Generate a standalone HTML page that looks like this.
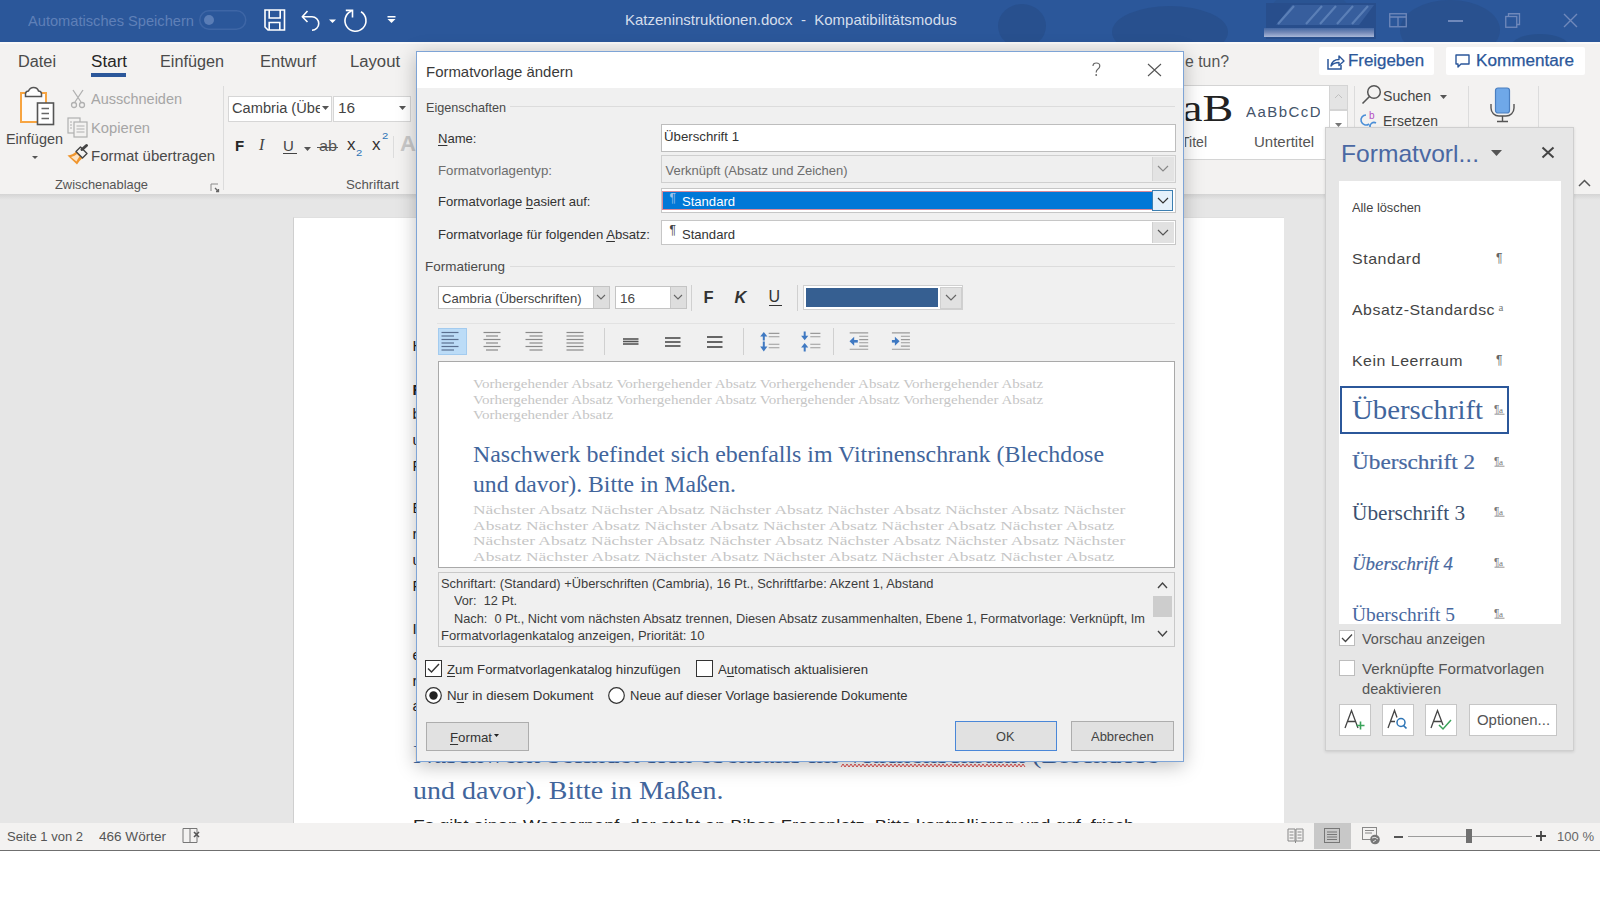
<!DOCTYPE html>
<html><head><meta charset="utf-8"><style>
html,body{margin:0;padding:0;width:1600px;height:900px;overflow:hidden;background:#fff;}
body{position:relative;font-family:"Liberation Sans", sans-serif;}
.a{position:absolute;}
.t{position:absolute;white-space:nowrap;line-height:1;transform-origin:0 0;}
svg{overflow:visible;}
</style></head><body>
<div class="a" style="left:0px;top:0px;width:1600px;height:42px;background:#2b579a;"></div>
<div class="a" style="left:0px;top:42px;width:1600px;height:152px;background:#f3f2f1;"></div>
<div class="a" style="left:0px;top:42px;width:1600px;height:2px;background:#faf9f8;"></div>
<div class="a" style="left:0px;top:194px;width:1600px;height:629px;background:#e6e6e6;"></div>
<div class="a" style="left:0px;top:194px;width:1600px;height:6px;background:linear-gradient(#d4d4d4,#e6e6e6);"></div>
<div class="a" style="left:293px;top:217px;width:991px;height:606px;background:#fff;border-left:1px solid #cfcfcf;border-top:1px solid #e0e0e0;box-sizing:border-box;"></div>
<div class="a" style="left:0px;top:850px;width:1600px;height:50px;background:#fff;"></div>
<span id="t0" class="t" style="left:412.5px;top:338.3px;font-size:15.00px;color:#222;font-weight:normal;">H</span>
<span id="t1" class="t" style="left:412.5px;top:382.3px;font-size:15.00px;color:#222;font-weight:bold;">F</span>
<span id="t2" class="t" style="left:412.5px;top:406.3px;font-size:15.00px;color:#222;font-weight:normal;">b</span>
<span id="t3" class="t" style="left:412.5px;top:432.3px;font-size:15.00px;color:#222;font-weight:normal;">u</span>
<span id="t4" class="t" style="left:412.5px;top:458.3px;font-size:15.00px;color:#222;font-weight:normal;">F</span>
<span id="t5" class="t" style="left:412.5px;top:500.3px;font-size:15.00px;color:#222;font-weight:normal;">E</span>
<span id="t6" class="t" style="left:412.5px;top:526.3px;font-size:15.00px;color:#222;font-weight:normal;">r</span>
<span id="t7" class="t" style="left:412.5px;top:552.3px;font-size:15.00px;color:#222;font-weight:normal;">u</span>
<span id="t8" class="t" style="left:412.5px;top:578.3px;font-size:15.00px;color:#222;font-weight:normal;">F</span>
<span id="t9" class="t" style="left:412.5px;top:621.3px;font-size:15.00px;color:#222;font-weight:normal;">I</span>
<span id="t10" class="t" style="left:412.5px;top:647.3px;font-size:15.00px;color:#222;font-weight:normal;">e</span>
<span id="t11" class="t" style="left:412.5px;top:673.3px;font-size:15.00px;color:#222;font-weight:normal;">r</span>
<span id="t12" class="t" style="left:412.5px;top:698.3px;font-size:15.00px;color:#222;font-weight:normal;">a</span>
<span id="t13" class="t" style="left:413.0px;top:742.2px;font-size:26.00px;color:#41659c;font-weight:normal;font-family:'Liberation Serif', serif;transform:scaleX(1.0864);">Naschwerk befindet sich ebenfalls im Vitrinenschrank (Blechdose</span>
<svg class="a" style="left:841px;top:763px;" width="186" height="5" viewBox="0 0 186 5"><path d="M0 4 L2 1 L4 4 M4 4 L6 1 L8 4 M8 4 L10 1 L12 4 M12 4 L14 1 L16 4 M16 4 L18 1 L20 4 M20 4 L22 1 L24 4 M24 4 L26 1 L28 4 M28 4 L30 1 L32 4 M32 4 L34 1 L36 4 M36 4 L38 1 L40 4 M40 4 L42 1 L44 4 M44 4 L46 1 L48 4 M48 4 L50 1 L52 4 M52 4 L54 1 L56 4 M56 4 L58 1 L60 4 M60 4 L62 1 L64 4 M64 4 L66 1 L68 4 M68 4 L70 1 L72 4 M72 4 L74 1 L76 4 M76 4 L78 1 L80 4 M80 4 L82 1 L84 4 M84 4 L86 1 L88 4 M88 4 L90 1 L92 4 M92 4 L94 1 L96 4 M96 4 L98 1 L100 4 M100 4 L102 1 L104 4 M104 4 L106 1 L108 4 M108 4 L110 1 L112 4 M112 4 L114 1 L116 4 M116 4 L118 1 L120 4 M120 4 L122 1 L124 4 M124 4 L126 1 L128 4 M128 4 L130 1 L132 4 M132 4 L134 1 L136 4 M136 4 L138 1 L140 4 M140 4 L142 1 L144 4 M144 4 L146 1 L148 4 M148 4 L150 1 L152 4 M152 4 L154 1 L156 4 M156 4 L158 1 L160 4 M160 4 L162 1 L164 4 M164 4 L166 1 L168 4 M168 4 L170 1 L172 4 M172 4 L174 1 L176 4 M176 4 L178 1 L180 4 M180 4 L182 1 L184 4 " fill="none" stroke="#e03c3c" stroke-width="0.9"/></svg>
<span id="t14" class="t" style="left:413.0px;top:778.2px;font-size:26.00px;color:#41659c;font-weight:normal;font-family:'Liberation Serif', serif;transform:scaleX(1.0752);">und davor). Bitte in Maßen.</span>
<span id="t15" class="t" style="left:413.0px;top:817.3px;font-size:15.00px;color:#222;font-weight:normal;transform:scaleX(1.2109);">Es gibt einen Wassernapf, der steht an Bibos Fressplatz. Bitte kontrollieren und ggf. frisch</span>
<div class="a" style="left:0px;top:823px;width:1600px;height:28px;background:#f3f2f1;border-bottom:1px solid #6f6f6f;box-sizing:border-box;"></div>
<span id="t16" class="t" style="left:7.0px;top:830.0px;font-size:13.00px;color:#555;font-weight:normal;transform:scaleX(1.0015);">Seite 1 von 2</span>
<span id="t17" class="t" style="left:99.0px;top:830.0px;font-size:13.00px;color:#555;font-weight:normal;transform:scaleX(1.0424);">466 Wörter</span>
<svg class="a" style="left:182px;top:827px;" width="20" height="17" viewBox="0 0 20 17"><path d="M1 1.5 H8 V15.5 H1 Z M8 1.5 H15 V15.5 H8" fill="none" stroke="#777" stroke-width="1"/><path d="M12 5 L17 10 M17 5 L12 10" stroke="#555" stroke-width="1.6"/></svg>
<svg class="a" style="left:1287px;top:828px;" width="17" height="16" viewBox="0 0 17 16"><path d="M1 1 H8 V13 H1 Z M9 1 H16 V13 H9 Z" fill="none" stroke="#888" stroke-width="1"/><path d="M2.5 4 H6.5 M2.5 7 H6.5 M2.5 10 H6.5 M10.5 4 H14.5 M10.5 7 H14.5 M10.5 10 H14.5 M8.5 13 V15" stroke="#888" stroke-width="1"/></svg>
<div class="a" style="left:1314px;top:823px;width:37px;height:26px;background:#c8c8c8;"></div>
<svg class="a" style="left:1324px;top:828px;" width="17" height="16" viewBox="0 0 17 16"><rect x="0.5" y="0.5" width="15" height="14" fill="none" stroke="#777" stroke-width="1"/><path d="M3 4 H13 M3 6.5 H13 M3 9 H13 M3 11.5 H13" stroke="#777" stroke-width="1"/></svg>
<svg class="a" style="left:1362px;top:827px;" width="20" height="19" viewBox="0 0 20 19"><rect x="0.5" y="0.5" width="14" height="12" fill="none" stroke="#888" stroke-width="1"/><path d="M3 3.5 H12 M3 6 H10" stroke="#888" stroke-width="1"/><circle cx="13" cy="12.5" r="4.8" fill="#777"/><path d="M10 11 Q13 9 16 12 M11 15 L14 13" stroke="#eee" stroke-width="0.9" fill="none"/></svg>
<div class="a" style="left:1394px;top:835.5px;width:9px;height:2px;background:#555;"></div>
<div class="a" style="left:1408px;top:835.5px;width:124px;height:1.2px;background:#9c9c9c;"></div>
<div class="a" style="left:1466px;top:829px;width:6px;height:14px;background:#707070;"></div>
<svg class="a" style="left:1535px;top:830px;" width="12" height="12" viewBox="0 0 12 12"><path d="M6 1 V11 M1 6 H11" stroke="#444" stroke-width="1.8"/></svg>
<span id="t18" class="t" style="left:1557.0px;top:830.0px;font-size:13.00px;color:#666;font-weight:normal;transform:scaleX(1.0035);">100 %</span>
<span id="t19" class="t" style="left:28.0px;top:12.9px;font-size:15.00px;color:#5f80b8;font-weight:normal;transform:scaleX(0.9758);">Automatisches Speichern</span>
<span id="t20" class="t" style="left:625.0px;top:12.1px;font-size:15.00px;color:#d5deec;font-weight:normal;">Katzeninstruktionen.docx&nbsp; - &nbsp;Kompatibilitätsmodus</span>
<span id="t21" class="t" style="left:18.0px;top:53.8px;font-size:16.00px;color:#4a4a4a;font-weight:normal;transform:scaleX(1.0176);">Datei</span>
<span id="t22" class="t" style="left:91.0px;top:53.8px;font-size:16.00px;color:#262626;font-weight:normal;transform:scaleX(1.0672);">Start</span>
<div class="a" style="left:91px;top:73px;width:35px;height:4px;background:#2b579a;"></div>
<span id="t23" class="t" style="left:160.0px;top:53.8px;font-size:16.00px;color:#4a4a4a;font-weight:normal;transform:scaleX(1.0133);">Einfügen</span>
<span id="t24" class="t" style="left:260.0px;top:53.8px;font-size:16.00px;color:#4a4a4a;font-weight:normal;transform:scaleX(1.0329);">Entwurf</span>
<span id="t25" class="t" style="left:350.0px;top:53.8px;font-size:16.00px;color:#4a4a4a;font-weight:normal;transform:scaleX(1.0415);">Layout</span>
<span id="t26" class="t" style="left:1185.0px;top:53.8px;font-size:16.00px;color:#555;font-weight:normal;transform:scaleX(0.9889);">e tun?</span>
<svg class="a" style="left:980px;top:0px;overflow:hidden;" width="620" height="42" viewBox="0 0 620 42"><ellipse cx="42" cy="26" rx="24" ry="22" fill="#28508e"/><ellipse cx="190" cy="32" rx="58" ry="26" fill="#28508e"/><ellipse cx="330" cy="12" rx="40" ry="22" fill="#2a5493"/><ellipse cx="470" cy="30" rx="50" ry="30" fill="#29518f"/><ellipse cx="560" cy="48" rx="30" ry="14" fill="#27508d"/></svg>
<svg class="a" style="left:199px;top:10px;" width="48" height="20" viewBox="0 0 48 20"><rect x="0.75" y="0.75" width="46" height="18.5" rx="9.25" fill="none" stroke="#3e66a6" stroke-width="1.5"/><circle cx="10" cy="10" r="5" fill="#5a7db6"/></svg>
<svg class="a" style="left:264px;top:9px;" width="22" height="23" viewBox="0 0 22 23"><path d="M1 1 H20.5 V21 H4 L1 18 Z" fill="none" stroke="#fff" stroke-width="1.6"/><path d="M5.2 1 V9 H16.2 V1" fill="none" stroke="#fff" stroke-width="1.6"/><path d="M5.2 21 V13.5 H15.8 V21" fill="none" stroke="#fff" stroke-width="1.6"/></svg>
<svg class="a" style="left:300px;top:8px;" width="24" height="24" viewBox="0 0 24 24"><path d="M7.5 3 L2.3 8.75 L7.5 14 M2.3 8.75 H12 A6.75 6.75 0 0 1 12 22.25" fill="none" stroke="#fff" stroke-width="1.6" stroke-linejoin="round"/></svg>
<svg class="a" style="left:328.5px;top:18.5px;" width="8" height="5" viewBox="0 0 8 5"><path d="M0 0.5 H7 L3.5 4 Z" fill="#fff"/></svg>
<svg class="a" style="left:343px;top:8px;" width="26" height="26" viewBox="0 0 26 26"><path d="M8.5 3 A10.5 10.5 0 1 0 18 3.8" fill="none" stroke="#fff" stroke-width="1.6"/><path d="M2.8 2.4 H9.5 V9.5" fill="none" stroke="#fff" stroke-width="1.6"/></svg>
<svg class="a" style="left:387px;top:16px;" width="10" height="8" viewBox="0 0 10 8"><rect x="0.5" y="0" width="8" height="1.5" fill="#fff"/><path d="M0.5 3 H8.5 L4.5 7 Z" fill="#fff"/></svg>
<svg class="a" style="left:1262px;top:2px;" width="115" height="38" viewBox="0 0 115 38"><defs><linearGradient id="sbg" x1="0" y1="0" x2="0" y2="1"><stop offset="0" stop-color="#4468a3"/><stop offset="0.5" stop-color="#7489b8"/><stop offset="1" stop-color="#a9b8d8"/></linearGradient></defs><rect x="4" y="1" width="110" height="36" fill="#284e8c"/><path d="M30 3 H112 L97 23 H14 Z" fill="#38609e" opacity="0.9"/><path d="M16 22 L32 4 M44 22 L60 4 M58 22 L74 4 M75 22 L91 4 M90 22 L106 4" stroke="#6a8dc2" stroke-width="2.2" opacity="0.7"/><rect x="2" y="26" width="110" height="9" fill="url(#sbg)"/></svg>
<svg class="a" style="left:1389px;top:13px;" width="19" height="15" viewBox="0 0 19 15"><rect x="0.75" y="0.75" width="16.5" height="13" fill="none" stroke="#7089bb" stroke-width="1.3"/><path d="M0.75 4 H17.25 M9 4 V13.5" stroke="#7089bb" stroke-width="1.3"/></svg>
<div class="a" style="left:1448px;top:20px;width:15px;height:1.5px;background:#7089bb;"></div>
<svg class="a" style="left:1505px;top:13px;" width="16" height="15" viewBox="0 0 16 15"><rect x="0.75" y="3.5" width="11" height="10.75" fill="none" stroke="#7089bb" stroke-width="1.3"/><path d="M3.5 3.5 V0.75 H14.5 V11.5 H11.75" fill="none" stroke="#7089bb" stroke-width="1.3"/></svg>
<svg class="a" style="left:1563px;top:13px;" width="15" height="15" viewBox="0 0 15 15"><path d="M1 1 L14 14 M14 1 L1 14" stroke="#7089bb" stroke-width="1.4"/></svg>
<svg class="a" style="left:18px;top:86px;" width="40" height="40" viewBox="0 0 40 40"><rect x="3" y="7" width="25" height="29" fill="#fbfbfb" stroke="#f7a542" stroke-width="2"/><path d="M7.5 10.5 V7.5 Q8 5 10.5 5 Q12 1.5 15.5 1.5 Q19.5 1.5 20.5 5 Q23 5 23.5 7.5 V10.5 Z" fill="#fff" stroke="#555" stroke-width="1.5"/><rect x="19.5" y="17" width="16" height="21.5" fill="#fff" stroke="#555" stroke-width="1.6"/><path d="M23.5 22.5 H31 M23.5 27.5 H31 M23.5 32.5 H31" stroke="#666" stroke-width="1.3"/></svg>
<span id="t27" class="t" style="left:6.0px;top:130.6px;font-size:15.00px;color:#4a4a4a;font-weight:normal;transform:scaleX(0.9619);">Einfügen</span>
<svg class="a" style="left:32px;top:155.5px;" width="6" height="4" viewBox="0 0 6 4"><path d="M0 0 H6 L3 3 Z" fill="#555"/></svg>
<svg class="a" style="left:70px;top:89px;" width="16" height="20" viewBox="0 0 16 20"><path d="M3 1 L11 13 M13 1 L5 13" stroke="#b0b0b0" stroke-width="1.3" fill="none"/><circle cx="4" cy="16" r="2.5" fill="none" stroke="#b0b0b0" stroke-width="1.3"/><circle cx="12" cy="16" r="2.5" fill="none" stroke="#b0b0b0" stroke-width="1.3"/></svg>
<span id="t28" class="t" style="left:90.5px;top:91.8px;font-size:14.00px;color:#a6a6a6;font-weight:normal;transform:scaleX(1.0350);">Ausschneiden</span>
<svg class="a" style="left:67px;top:117px;" width="21" height="21" viewBox="0 0 21 21"><rect x="1" y="1" width="12" height="15" fill="none" stroke="#b0b0b0" stroke-width="1.2"/><rect x="7" y="5" width="13" height="15" fill="#f3f2f1" stroke="#b0b0b0" stroke-width="1.2"/><path d="M3 5 H5 M3 8 H5 M3 11 H5 M9.5 9 H17.5 M9.5 12 H17.5 M9.5 15 H17.5" stroke="#b0b0b0" stroke-width="1"/></svg>
<span id="t29" class="t" style="left:90.5px;top:121.1px;font-size:14.00px;color:#a6a6a6;font-weight:normal;transform:scaleX(1.0536);">Kopieren</span>
<svg class="a" style="left:66px;top:145px;" width="24" height="20" viewBox="0 0 24 20"><path d="M1.5 10.5 Q7 10 10 6.5 L16.5 13 Q13 16 11 19.5 Z" fill="#f0962e"/><path d="M5 12 Q9 11 11 9 L13.5 11.5 Q11.5 14 10.5 16.5 Z" fill="#fde3c4"/><path d="M10 6.5 L14.5 2 L21 8.5 L16.5 13 Z" fill="#f3f3f3" stroke="#444" stroke-width="1.4" stroke-linejoin="round"/><path d="M16 4.5 L20.5 0.5" stroke="#444" stroke-width="3" stroke-linecap="round"/></svg>
<span id="t30" class="t" style="left:90.5px;top:149.3px;font-size:14.00px;color:#4a4a4a;font-weight:normal;transform:scaleX(1.0700);">Format übertragen</span>
<span id="t31" class="t" style="left:55.0px;top:177.5px;font-size:13.00px;color:#555;font-weight:normal;transform:scaleX(0.9897);">Zwischenablage</span>
<svg class="a" style="left:210px;top:183px;" width="10" height="9" viewBox="0 0 10 9"><path d="M1 8 V1 H8" fill="none" stroke="#8a8a8a" stroke-width="1"/><path d="M5 5 L8.5 8.5 M6 8.5 H8.5 V6" stroke="#666" stroke-width="1.3" fill="none"/></svg>
<div class="a" style="left:223px;top:86px;width:1px;height:104px;background:#dcdcdc;"></div>
<div class="a" style="left:227.5px;top:95.5px;width:104px;height:26px;background:#fff;border:1px solid #d6d6d6;box-sizing:border-box;"></div>
<div class="a" style="left:332.5px;top:95.5px;width:78px;height:26px;background:#fff;border:1px solid #d6d6d6;box-sizing:border-box;"></div>
<span id="t32" class="t" style="left:232.0px;top:101.4px;font-size:14.00px;color:#444;font-weight:normal;transform:scaleX(1.0448);clip-path:inset(-6px 3px -6px 0);">Cambria (Übe</span>
<svg class="a" style="left:322px;top:106px;" width="8" height="5" viewBox="0 0 8 5"><path d="M0 0 H7 L3.5 4 Z" fill="#555"/></svg>
<span id="t33" class="t" style="left:338.0px;top:101.4px;font-size:14.00px;color:#444;font-weight:normal;transform:scaleX(1.0975);">16</span>
<svg class="a" style="left:399px;top:106px;" width="8" height="5" viewBox="0 0 8 5"><path d="M0 0 H7 L3.5 4 Z" fill="#555"/></svg>
<span id="t34" class="t" style="left:235.0px;top:138.3px;font-size:15.00px;color:#262626;font-weight:bold;">F</span>
<span id="t35" class="t" style="left:259.0px;top:137.3px;font-size:16.00px;color:#444;font-weight:normal;font-family:'Liberation Serif', serif;font-style:italic;">I</span>
<span id="t36" class="t" style="left:283.0px;top:138.0px;font-size:15.00px;color:#444;font-weight:normal;">U</span>
<div class="a" style="left:283px;top:152.5px;width:14px;height:1.3px;background:#444;"></div>
<svg class="a" style="left:304px;top:147px;" width="8" height="5" viewBox="0 0 8 5"><path d="M0 0 H7 L3.5 4 Z" fill="#555"/></svg>
<span id="t37" class="t" style="left:319.0px;top:138.0px;font-size:15.00px;color:#555;font-weight:normal;transform:scaleX(1.0837);">ab</span>
<div class="a" style="left:317px;top:147px;width:21px;height:1.3px;background:#555;"></div>
<span id="t38" class="t" style="left:347.0px;top:136.3px;font-size:17.00px;color:#333;font-weight:normal;">x</span>
<span id="t39" class="t" style="left:356.0px;top:149.4px;font-size:9.00px;color:#2e75b6;font-weight:normal;transform:scaleX(1.2451);">2</span>
<span id="t40" class="t" style="left:372.0px;top:136.3px;font-size:17.00px;color:#333;font-weight:normal;">x</span>
<span id="t41" class="t" style="left:382.0px;top:132.4px;font-size:9.00px;color:#2e75b6;font-weight:normal;transform:scaleX(1.2451);">2</span>
<div class="a" style="left:393px;top:136px;width:1px;height:22px;background:#dcdcdc;"></div>
<span id="t42" class="t" style="left:400.0px;top:133.4px;font-size:22.00px;color:#c8c8c8;font-weight:bold;">A</span>
<span id="t43" class="t" style="left:346.0px;top:177.7px;font-size:13.00px;color:#555;font-weight:normal;transform:scaleX(1.0193);">Schriftart</span>
<div class="a" style="left:1319px;top:47px;width:115px;height:28px;background:#fff;border-radius:2px;"></div>
<div class="a" style="left:1445.5px;top:47px;width:139px;height:28px;background:#fff;border-radius:2px;"></div>
<svg class="a" style="left:1327px;top:54px;" width="18" height="16" viewBox="0 0 18 16"><path d="M1 5 V15 H14 V11" fill="none" stroke="#2b579a" stroke-width="1.5"/><path d="M4 12 C5 7 9 5.5 12 5.5 V2 L17 7 L12 11.5 V8.5 C9 8.5 6 9.5 4 12 Z" fill="none" stroke="#2b579a" stroke-width="1.4" stroke-linejoin="round"/></svg>
<span id="t44" class="t" style="left:1347.5px;top:53.2px;font-size:16.00px;color:#2b579a;font-weight:normal;transform:scaleX(1.0556);-webkit-text-stroke:0.25px #2b579a;">Freigeben</span>
<svg class="a" style="left:1455px;top:54px;" width="16" height="16" viewBox="0 0 16 16"><path d="M1 1 H14 V10 H6 L3 13 V10 H1 Z" fill="none" stroke="#2b579a" stroke-width="1.4" stroke-linejoin="round"/></svg>
<span id="t45" class="t" style="left:1475.5px;top:53.2px;font-size:16.00px;color:#2b579a;font-weight:normal;transform:scaleX(1.0707);-webkit-text-stroke:0.25px #2b579a;">Kommentare</span>
<div class="a" style="left:1176px;top:85px;width:153px;height:75px;background:#fff;border:1px solid #d4d4d4;border-right:none;box-sizing:border-box;"></div>
<div class="a" style="left:1329px;top:85px;width:19px;height:25px;background:#e4e4e4;border:1px solid #d4d4d4;box-sizing:border-box;"></div>
<svg class="a" style="left:1335px;top:94px;" width="7" height="5" viewBox="0 0 7 5"><path d="M0 4 L3.5 0.5 L7 4" fill="none" stroke="#c0c0c0" stroke-width="1"/></svg>
<div class="a" style="left:1329px;top:110px;width:19px;height:26px;background:#fff;border:1px solid #d4d4d4;box-sizing:border-box;"></div>
<div class="a" style="left:1329px;top:135px;width:19px;height:25px;background:#fff;border:1px solid #d4d4d4;box-sizing:border-box;"></div>
<svg class="a" style="left:1335px;top:123px;" width="8" height="5" viewBox="0 0 8 5"><path d="M0 0 H7 L3.5 4 Z" fill="#777"/></svg>
<span id="t46" class="t" style="left:1182.0px;top:89.7px;font-size:37.00px;color:#222;font-weight:normal;font-family:'Liberation Serif', serif;transform:scaleX(1.2466);clip-path:inset(-10px 0 -10px 3px);">aB</span>
<span id="t47" class="t" style="left:1246.0px;top:104.2px;font-size:15.50px;color:#44546a;font-weight:normal;transform:scaleX(0.9670);letter-spacing:1.5px;clip-path:inset(-5px 2px -5px 0);">AaBbCcD</span>
<span id="t48" class="t" style="left:1181.0px;top:135.4px;font-size:14.00px;color:#555;font-weight:normal;transform:scaleX(1.0025);clip-path:inset(-5px 0 -5px 4px);">Titel</span>
<span id="t49" class="t" style="left:1254.0px;top:135.4px;font-size:14.00px;color:#555;font-weight:normal;transform:scaleX(1.0721);">Untertitel</span>
<div class="a" style="left:1354px;top:86px;width:1px;height:104px;background:#dcdcdc;"></div>
<svg class="a" style="left:1361px;top:84px;" width="22" height="20" viewBox="0 0 22 20"><circle cx="13" cy="8" r="6.3" fill="none" stroke="#555" stroke-width="1.5"/><path d="M8.5 12.5 L1.5 19.5" stroke="#555" stroke-width="1.6"/></svg>
<span id="t50" class="t" style="left:1383.0px;top:88.5px;font-size:14.00px;color:#444;font-weight:normal;transform:scaleX(1.0111);">Suchen</span>
<svg class="a" style="left:1440px;top:95px;" width="8" height="5" viewBox="0 0 8 5"><path d="M0 0 H7 L3.5 4 Z" fill="#555"/></svg>
<svg class="a" style="left:1360px;top:110px;" width="26" height="18" viewBox="0 0 26 18"><path d="M6 5 A5 5 0 1 0 9 14" fill="none" stroke="#4b8fd8" stroke-width="1.6"/><path d="M10 17 A4 4 0 0 1 16 13" fill="none" stroke="#4b8fd8" stroke-width="1.6"/><text x="9" y="9" font-size="10" font-family="Liberation Sans" fill="#b44fc4">b</text></svg>
<span id="t51" class="t" style="left:1383.0px;top:114.1px;font-size:14.00px;color:#444;font-weight:normal;transform:scaleX(0.9954);">Ersetzen</span>
<div class="a" style="left:1468px;top:86px;width:1px;height:104px;background:#dcdcdc;"></div>
<svg class="a" style="left:1489px;top:87px;" width="28" height="37" viewBox="0 0 28 37"><rect x="6.5" y="1" width="14" height="25" rx="2.5" fill="#6fa8e8" stroke="#4a7fc0" stroke-width="1.2"/><path d="M2 17 V21 A8 8 0 0 0 10 29 H17 A8 8 0 0 0 25 21 V17" fill="none" stroke="#555" stroke-width="1.4"/><path d="M13.5 29 V34 M8 34.5 H19" stroke="#555" stroke-width="1.4"/></svg>
<div class="a" style="left:1538px;top:86px;width:1px;height:104px;background:#dcdcdc;"></div>
<svg class="a" style="left:1578px;top:179px;" width="13" height="8" viewBox="0 0 13 8"><path d="M1 7 L6.5 1.5 L12 7" fill="none" stroke="#555" stroke-width="1.5"/></svg>
<div class="a" style="left:1325px;top:127px;width:249px;height:624px;background:#e6e6e6;border:1px solid #cfcfcf;box-sizing:border-box;box-shadow:0 1px 3px rgba(0,0,0,0.12);"></div>
<span id="t52" class="t" style="left:1340.5px;top:142.3px;font-size:24.00px;color:#4a68a3;font-weight:normal;transform:scaleX(1.0248);">Formatvorl...</span>
<svg class="a" style="left:1491px;top:150px;" width="12" height="7" viewBox="0 0 12 7"><path d="M0 0 H11 L5.5 6 Z" fill="#555"/></svg>
<svg class="a" style="left:1541px;top:146px;" width="14" height="13" viewBox="0 0 14 13"><path d="M1.5 1.5 L12.5 11.5 M12.5 1.5 L1.5 11.5" stroke="#444" stroke-width="2"/></svg>
<div class="a" style="left:1339px;top:181px;width:222px;height:443px;background:#fff;"></div>
<span id="t53" class="t" style="left:1351.5px;top:201.0px;font-size:13.00px;color:#444;font-weight:normal;transform:scaleX(0.9839);">Alle löschen</span>
<span id="t54" class="t" style="left:1351.5px;top:251.3px;font-size:15.00px;color:#444;font-weight:normal;transform:scaleX(1.0643);letter-spacing:0.5px;">Standard</span>
<span id="t55" class="t" style="left:1351.5px;top:302.3px;font-size:15.00px;color:#444;font-weight:normal;transform:scaleX(1.0579);letter-spacing:0.5px;">Absatz-Standardsc</span>
<span id="t56" class="t" style="left:1351.5px;top:353.3px;font-size:15.00px;color:#444;font-weight:normal;transform:scaleX(1.0588);letter-spacing:0.5px;">Kein Leerraum</span>
<span id="t57" class="t" style="left:1496.0px;top:251.8px;font-size:12.00px;color:#666;font-weight:normal;">¶</span>
<span id="t58" class="t" style="left:1498.5px;top:302.3px;font-size:11.00px;color:#777;font-weight:normal;font-family:'Liberation Serif', serif;">a</span>
<span id="t59" class="t" style="left:1496.0px;top:353.8px;font-size:12.00px;color:#666;font-weight:normal;">¶</span>
<div class="a" style="left:1340px;top:386px;width:169px;height:48px;border:2px solid #2b579a;box-sizing:border-box;"></div>
<span id="t60" class="t" style="left:1351.5px;top:397.4px;font-size:27.00px;color:#41659c;font-weight:normal;font-family:'Liberation Serif', serif;transform:scaleX(1.0660);">Überschrift</span>
<span id="t61" class="t" style="left:1351.5px;top:452.3px;font-size:20.00px;color:#4868a0;font-weight:normal;font-family:'Liberation Serif', serif;transform:scaleX(1.1610);-webkit-text-stroke:0.2px #4868a0;">Überschrift 2</span>
<span id="t62" class="t" style="left:1351.5px;top:503.3px;font-size:20.00px;color:#3b5070;font-weight:normal;font-family:'Liberation Serif', serif;transform:scaleX(1.0659);">Überschrift 3</span>
<span id="t63" class="t" style="left:1351.5px;top:554.5px;font-size:18.50px;color:#4868a0;font-weight:normal;font-family:'Liberation Serif', serif;font-style:italic;transform:scaleX(1.0185);-webkit-text-stroke:0.2px #4868a0;">Überschrift 4</span>
<span id="t64" class="t" style="left:1351.5px;top:605.5px;font-size:18.50px;color:#4868a0;font-weight:normal;font-family:'Liberation Serif', serif;transform:scaleX(1.0502);">Überschrift 5</span>
<svg class="a" style="left:1494px;top:405px;" width="11" height="10" viewBox="0 0 11 10"><text x="0" y="7.5" font-size="10" font-family="Liberation Sans" fill="#777">¶</text><text x="5" y="7.5" font-size="9" font-family="Liberation Serif" fill="#777">a</text><path d="M0.5 9.2 H10.5" stroke="#888" stroke-width="0.9"/></svg>
<svg class="a" style="left:1494px;top:457px;" width="11" height="10" viewBox="0 0 11 10"><text x="0" y="7.5" font-size="10" font-family="Liberation Sans" fill="#777">¶</text><text x="5" y="7.5" font-size="9" font-family="Liberation Serif" fill="#777">a</text><path d="M0.5 9.2 H10.5" stroke="#888" stroke-width="0.9"/></svg>
<svg class="a" style="left:1494px;top:507px;" width="11" height="10" viewBox="0 0 11 10"><text x="0" y="7.5" font-size="10" font-family="Liberation Sans" fill="#777">¶</text><text x="5" y="7.5" font-size="9" font-family="Liberation Serif" fill="#777">a</text><path d="M0.5 9.2 H10.5" stroke="#888" stroke-width="0.9"/></svg>
<svg class="a" style="left:1494px;top:558px;" width="11" height="10" viewBox="0 0 11 10"><text x="0" y="7.5" font-size="10" font-family="Liberation Sans" fill="#777">¶</text><text x="5" y="7.5" font-size="9" font-family="Liberation Serif" fill="#777">a</text><path d="M0.5 9.2 H10.5" stroke="#888" stroke-width="0.9"/></svg>
<svg class="a" style="left:1494px;top:609px;" width="11" height="10" viewBox="0 0 11 10"><text x="0" y="7.5" font-size="10" font-family="Liberation Sans" fill="#777">¶</text><text x="5" y="7.5" font-size="9" font-family="Liberation Serif" fill="#777">a</text><path d="M0.5 9.2 H10.5" stroke="#888" stroke-width="0.9"/></svg>
<div class="a" style="left:1339px;top:630px;width:16px;height:16px;background:#fff;border:1px solid #bdbdbd;box-sizing:border-box;"></div>
<svg class="a" style="left:1341px;top:633px;" width="12" height="10" viewBox="0 0 12 10"><path d="M1 5 L4.5 8.5 L11 1.5" fill="none" stroke="#444" stroke-width="1.3"/></svg>
<span id="t65" class="t" style="left:1362.0px;top:632.1px;font-size:14.00px;color:#555;font-weight:normal;transform:scaleX(1.0331);">Vorschau anzeigen</span>
<div class="a" style="left:1339px;top:660px;width:16px;height:16px;background:#fff;border:1px solid #bdbdbd;box-sizing:border-box;"></div>
<span id="t66" class="t" style="left:1362.0px;top:662.1px;font-size:14.00px;color:#555;font-weight:normal;transform:scaleX(1.0782);">Verknüpfte Formatvorlagen</span>
<span id="t67" class="t" style="left:1362.0px;top:682.1px;font-size:14.00px;color:#555;font-weight:normal;transform:scaleX(1.0470);">deaktivieren</span>
<div class="a" style="left:1339px;top:704px;width:32px;height:32px;background:#fff;border:1px solid #c6c6c6;box-sizing:border-box;"></div>
<div class="a" style="left:1382px;top:704px;width:32px;height:32px;background:#fff;border:1px solid #c6c6c6;box-sizing:border-box;"></div>
<div class="a" style="left:1425px;top:704px;width:32px;height:32px;background:#fff;border:1px solid #c6c6c6;box-sizing:border-box;"></div>
<svg class="a" style="left:1344px;top:709px;" width="16" height="20" viewBox="0 0 16 20"><path d="M1 19 L7.5 1.5 L14 19 M3.5 12.5 H11.5" fill="none" stroke="#444" stroke-width="1.3"/></svg>
<svg class="a" style="left:1356px;top:721px;" width="9" height="9" viewBox="0 0 9 9"><path d="M4.5 0.5 V8.5 M0.5 4.5 H8.5" stroke="#3aa35a" stroke-width="1.6"/></svg>
<svg class="a" style="left:1387px;top:709px;" width="16" height="20" viewBox="0 0 16 20"><path d="M1 19 L7.5 1.5 L10 8.5 M3.5 12.5 H8" fill="none" stroke="#444" stroke-width="1.3"/></svg>
<svg class="a" style="left:1394px;top:716px;" width="14" height="14" viewBox="0 0 14 14"><circle cx="7" cy="6.5" r="4" fill="none" stroke="#2e75b6" stroke-width="1.5"/><path d="M9 9 L12.5 12.5" stroke="#2e75b6" stroke-width="1.7"/></svg>
<svg class="a" style="left:1430px;top:709px;" width="16" height="20" viewBox="0 0 16 20"><path d="M1 19 L7.5 1.5 L13 16 M3.5 12.5 H11.5" fill="none" stroke="#444" stroke-width="1.3"/></svg>
<svg class="a" style="left:1438px;top:719px;" width="14" height="12" viewBox="0 0 14 12"><path d="M1 6 L5 10 L13 1" fill="none" stroke="#3aa35a" stroke-width="1.5"/></svg>
<div class="a" style="left:1469px;top:704px;width:88px;height:32px;background:#fff;border:1px solid #c6c6c6;box-sizing:border-box;"></div>
<span id="t68" class="t" style="left:1476.5px;top:713.1px;font-size:14.00px;color:#555;font-weight:normal;transform:scaleX(1.0667);">Optionen...</span>
<div class="a" style="left:416px;top:51px;width:768px;height:711px;background:#f0f0f0;border:1px solid #7ea4d6;box-sizing:border-box;box-shadow:0 4px 18px rgba(0,0,0,0.25);"></div>
<div class="a" style="left:417px;top:52px;width:766px;height:36px;background:#fff;"></div>
<span id="t69" class="t" style="left:426.0px;top:63.6px;font-size:15.00px;color:#3a3a3a;font-weight:normal;transform:scaleX(0.9961);">Formatvorlage ändern</span>
<svg class="a" style="left:1092px;top:62px;" width="9" height="15" viewBox="0 0 9 15"><path d="M1 4 Q1 1 4.3 1 Q7.8 1 7.8 4 Q7.8 6 5.5 7.5 Q4.2 8.5 4.2 10.5" fill="none" stroke="#666" stroke-width="1.2"/><circle cx="4.2" cy="13" r="0.9" fill="#666"/></svg>
<svg class="a" style="left:1147px;top:63px;" width="15" height="14" viewBox="0 0 15 14"><path d="M1 1 L14 13 M14 1 L1 13" stroke="#555" stroke-width="1.1"/></svg>
<span id="t70" class="t" style="left:425.5px;top:101.0px;font-size:13.00px;color:#4a4a4a;font-weight:normal;transform:scaleX(0.9704);">Eigenschaften</span>
<div class="a" style="left:510px;top:106px;width:665px;height:1px;background:#dcdcdc;"></div>
<span id="t71" class="t" style="left:438.0px;top:131.5px;font-size:13.00px;color:#333;font-weight:normal;transform:scaleX(1.0054);"><u style="text-decoration-thickness:1px;text-underline-offset:2px;">N</u>ame:</span>
<span id="t72" class="t" style="left:438.0px;top:164.0px;font-size:13.00px;color:#6d6d6d;font-weight:normal;transform:scaleX(1.0180);">Formatvorlagentyp:</span>
<span id="t73" class="t" style="left:438.0px;top:195.2px;font-size:13.00px;color:#333;font-weight:normal;transform:scaleX(1.0050);">Formatvorlage <u style="text-decoration-thickness:1px;text-underline-offset:2px;">b</u>asiert auf:</span>
<span id="t74" class="t" style="left:438.0px;top:227.7px;font-size:13.00px;color:#333;font-weight:normal;transform:scaleX(1.0116);">Formatvorlage für folgenden <u style="text-decoration-thickness:1px;text-underline-offset:2px;">A</u>bsatz:</span>
<div class="a" style="left:660.5px;top:123.5px;width:515px;height:28px;background:#fff;border:1px solid #bdbdbd;box-sizing:border-box;"></div>
<span id="t75" class="t" style="left:663.5px;top:130.2px;font-size:13.00px;color:#333;font-weight:normal;transform:scaleX(1.0178);">Überschrift 1</span>
<div class="a" style="left:660.5px;top:155px;width:515px;height:28px;background:#efefef;border:1px solid #cfcfcf;box-sizing:border-box;"></div>
<div class="a" style="left:1152px;top:157px;width:22px;height:24px;background:#e3e3e3;border-left:1px solid #d4d4d4;box-sizing:border-box;"></div>
<svg class="a" style="left:1157px;top:165px;" width="12" height="7" viewBox="0 0 12 7"><path d="M1 1 L6 6 L11 1" fill="none" stroke="#888" stroke-width="1.2"/></svg>
<span id="t76" class="t" style="left:665.5px;top:164.0px;font-size:13.00px;color:#6d6d6d;font-weight:normal;">Verknüpft (Absatz und Zeichen)</span>
<div class="a" style="left:660.5px;top:187.5px;width:515px;height:25.5px;background:#fff;border:1px solid #c6c6c6;box-sizing:border-box;"></div>
<div class="a" style="left:662.5px;top:192px;width:489.5px;height:16.5px;background:#0078d7;box-shadow:0 0 0 1px #d88a9a;"></div>
<div class="a" style="left:1152px;top:190px;width:21px;height:21px;background:#e5f1fb;border:1px solid #3c7fb1;box-sizing:border-box;"></div>
<svg class="a" style="left:1157px;top:197px;" width="12" height="7" viewBox="0 0 12 7"><path d="M1 1 L6 6 L11 1" fill="none" stroke="#333" stroke-width="1.2"/></svg>
<span id="t77" class="t" style="left:669.5px;top:191.8px;font-size:12.00px;color:#9cc3ea;font-weight:normal;">¶</span>
<span id="t78" class="t" style="left:682.0px;top:195.2px;font-size:13.00px;color:#fff;font-weight:normal;transform:scaleX(1.0045);">Standard</span>
<div class="a" style="left:660.5px;top:219.5px;width:515px;height:25px;background:#fff;border:1px solid #c6c6c6;box-sizing:border-box;"></div>
<div class="a" style="left:1152px;top:221.5px;width:22px;height:21.5px;background:#e1e1e1;border-left:1px solid #cfcfcf;box-sizing:border-box;"></div>
<svg class="a" style="left:1157px;top:229px;" width="12" height="7" viewBox="0 0 12 7"><path d="M1 1 L6 6 L11 1" fill="none" stroke="#555" stroke-width="1.2"/></svg>
<span id="t79" class="t" style="left:669.5px;top:223.8px;font-size:12.00px;color:#444;font-weight:normal;">¶</span>
<span id="t80" class="t" style="left:682.0px;top:227.7px;font-size:13.00px;color:#333;font-weight:normal;transform:scaleX(1.0045);">Standard</span>
<span id="t81" class="t" style="left:425.0px;top:260.2px;font-size:13.00px;color:#4a4a4a;font-weight:normal;transform:scaleX(1.0352);">Formatierung</span>
<div class="a" style="left:510px;top:266px;width:665px;height:1px;background:#dcdcdc;"></div>
<div class="a" style="left:437.5px;top:286px;width:172px;height:23px;background:#fff;border:1px solid #c4c4c4;box-sizing:border-box;"></div>
<div class="a" style="left:592.5px;top:287px;width:16px;height:21px;background:#dedede;border-left:1px solid #c9c9c9;box-sizing:border-box;"></div>
<svg class="a" style="left:596px;top:294px;" width="10" height="6" viewBox="0 0 10 6"><path d="M1 1 L5 5 L9 1" fill="none" stroke="#666" stroke-width="1.1"/></svg>
<span id="t82" class="t" style="left:442.0px;top:291.5px;font-size:13.00px;color:#444;font-weight:normal;transform:scaleX(1.0058);">Cambria (Überschriften)</span>
<div class="a" style="left:614.5px;top:286px;width:72px;height:23px;background:#fff;border:1px solid #c4c4c4;box-sizing:border-box;"></div>
<div class="a" style="left:669.5px;top:287px;width:16px;height:21px;background:#dedede;border-left:1px solid #c9c9c9;box-sizing:border-box;"></div>
<svg class="a" style="left:673px;top:294px;" width="10" height="6" viewBox="0 0 10 6"><path d="M1 1 L5 5 L9 1" fill="none" stroke="#666" stroke-width="1.1"/></svg>
<span id="t83" class="t" style="left:619.5px;top:291.5px;font-size:13.00px;color:#444;font-weight:normal;transform:scaleX(1.0394);">16</span>
<div class="a" style="left:691px;top:285px;width:1px;height:26px;background:#d0d0d0;"></div>
<span id="t84" class="t" style="left:703.5px;top:288.5px;font-size:16.50px;color:#333;font-weight:bold;">F</span>
<span id="t85" class="t" style="left:734.5px;top:288.5px;font-size:16.50px;color:#333;font-weight:bold;font-style:italic;">K</span>
<span id="t86" class="t" style="left:768.5px;top:289.0px;font-size:16.00px;color:#333;font-weight:normal;">U</span>
<div class="a" style="left:769px;top:304.5px;width:13px;height:1.5px;background:#333;"></div>
<div class="a" style="left:797px;top:285px;width:1px;height:26px;background:#d0d0d0;"></div>
<div class="a" style="left:802.5px;top:284.5px;width:160px;height:25.5px;background:#fff;border:1px solid #d0d0d0;box-sizing:border-box;"></div>
<div class="a" style="left:805.5px;top:287.5px;width:132.5px;height:19.5px;background:#365f91;"></div>
<div class="a" style="left:940px;top:286.5px;width:21.5px;height:22px;background:#e1e1e1;border:1px solid #cfcfcf;box-sizing:border-box;"></div>
<svg class="a" style="left:945px;top:294px;" width="12" height="7" viewBox="0 0 12 7"><path d="M1 1 L6 6 L11 1" fill="none" stroke="#666" stroke-width="1.2"/></svg>
<div class="a" style="left:437px;top:322.5px;width:738px;height:1px;background:#e2e2e2;"></div>
<div class="a" style="left:437.5px;top:328px;width:29px;height:27px;background:#bcdcf7;border:1px solid #a3cbef;box-sizing:border-box;"></div>
<svg class="a" style="left:441px;top:331.5px;" width="24" height="24" viewBox="0 0 24 24"><path d="M0.5 0.5 H17.5" stroke="#5a6f8f" stroke-width="1.2"/><path d="M0.5 4 H13" stroke="#5a6f8f" stroke-width="1.2"/><path d="M0.5 7.5 H17.5" stroke="#5a6f8f" stroke-width="1.2"/><path d="M0.5 11 H13" stroke="#5a6f8f" stroke-width="1.2"/><path d="M0.5 14.5 H17.5" stroke="#5a6f8f" stroke-width="1.2"/><path d="M0.5 18 H13" stroke="#5a6f8f" stroke-width="1.2"/></svg>
<svg class="a" style="left:483px;top:331.5px;" width="24" height="24" viewBox="0 0 24 24"><path d="M0.5 0.5 H17.5" stroke="#8a8a8a" stroke-width="1.2"/><path d="M3 4 H15" stroke="#8a8a8a" stroke-width="1.2"/><path d="M0.5 7.5 H17.5" stroke="#8a8a8a" stroke-width="1.2"/><path d="M3 11 H15" stroke="#8a8a8a" stroke-width="1.2"/><path d="M0.5 14.5 H17.5" stroke="#8a8a8a" stroke-width="1.2"/><path d="M3 18 H15" stroke="#8a8a8a" stroke-width="1.2"/></svg>
<svg class="a" style="left:525px;top:331.5px;" width="24" height="24" viewBox="0 0 24 24"><path d="M0.5 0.5 H17.5" stroke="#8a8a8a" stroke-width="1.2"/><path d="M4.5 4 H17.5" stroke="#8a8a8a" stroke-width="1.2"/><path d="M0.5 7.5 H17.5" stroke="#8a8a8a" stroke-width="1.2"/><path d="M4.5 11 H17.5" stroke="#8a8a8a" stroke-width="1.2"/><path d="M0.5 14.5 H17.5" stroke="#8a8a8a" stroke-width="1.2"/><path d="M4.5 18 H17.5" stroke="#8a8a8a" stroke-width="1.2"/></svg>
<svg class="a" style="left:566px;top:331.5px;" width="24" height="24" viewBox="0 0 24 24"><path d="M0.5 0.5 H17.5" stroke="#8a8a8a" stroke-width="1.2"/><path d="M0.5 4 H17.5" stroke="#8a8a8a" stroke-width="1.2"/><path d="M0.5 7.5 H17.5" stroke="#8a8a8a" stroke-width="1.2"/><path d="M0.5 11 H17.5" stroke="#8a8a8a" stroke-width="1.2"/><path d="M0.5 14.5 H17.5" stroke="#8a8a8a" stroke-width="1.2"/><path d="M0.5 18 H17.5" stroke="#8a8a8a" stroke-width="1.2"/></svg>
<div class="a" style="left:604px;top:328px;width:1px;height:27px;background:#d0d0d0;"></div>
<svg class="a" style="left:623px;top:331px;" width="24" height="24" viewBox="0 0 24 24"><path d="M0 8 H15.5" stroke="#555" stroke-width="1.6"/><path d="M0 10.5 H15.5" stroke="#555" stroke-width="1.6"/><path d="M0 13 H15.5" stroke="#555" stroke-width="1.6"/></svg>
<svg class="a" style="left:664.5px;top:331px;" width="24" height="24" viewBox="0 0 24 24"><path d="M0 7 H15.5" stroke="#555" stroke-width="1.7"/><path d="M0 11 H15.5" stroke="#555" stroke-width="1.7"/><path d="M0 15 H15.5" stroke="#555" stroke-width="1.7"/></svg>
<svg class="a" style="left:706.5px;top:331px;" width="24" height="24" viewBox="0 0 24 24"><path d="M0 6 H15.5" stroke="#555" stroke-width="1.8"/><path d="M0 11 H15.5" stroke="#555" stroke-width="1.8"/><path d="M0 16 H15.5" stroke="#555" stroke-width="1.8"/></svg>
<div class="a" style="left:743px;top:328px;width:1px;height:27px;background:#d0d0d0;"></div>
<svg class="a" style="left:759px;top:330px;" width="22" height="23" viewBox="0 0 22 23"><path d="M4.8 5 V10.5 M4.8 11.5 V17.5" stroke="#3f79c2" stroke-width="2"/><path d="M1.2 6.5 L4.8 2 L8.4 6.5 Z M1.2 16.5 L4.8 21.4 L8.4 16.5 Z" fill="#3f79c2"/><path d="M9.7 3.4 H20.4 M9.7 6.8 H20.4 M9.7 14.3 H20.4 M9.7 17.8 H20.4" stroke="#9a9a9a" stroke-width="1.1"/></svg>
<svg class="a" style="left:800px;top:330px;" width="22" height="23" viewBox="0 0 22 23"><path d="M4.7 1.5 V7 M4.7 16 V21.5" stroke="#3f79c2" stroke-width="2"/><path d="M1.1 5.7 L4.7 10.2 L8.3 5.7 Z M1.1 17.5 L4.7 13 L8.3 17.5 Z" fill="#3f79c2"/><path d="M10.3 3.4 H20.4 M10.3 6.8 H20.4 M10.3 14.3 H20.4 M10.3 17.8 H20.4" stroke="#9a9a9a" stroke-width="1.1"/></svg>
<div class="a" style="left:833px;top:328px;width:1px;height:27px;background:#d0d0d0;"></div>
<svg class="a" style="left:849px;top:330px;" width="21" height="22" viewBox="0 0 21 22"><path d="M0.7 2.9 H19.2 M10.2 6.3 H19.2 M10.2 9.6 H19.2 M10.2 12.8 H19.2 M10.2 16.1 H19.2 M0.7 19.2 H19.2" stroke="#9a9a9a" stroke-width="1.1"/><path d="M0.5 11.3 L5.2 6.8 L5.2 15.8 Z" fill="#3f79c2"/><path d="M5 11.3 H8.8" stroke="#3f79c2" stroke-width="2.6"/></svg>
<svg class="a" style="left:891px;top:330px;" width="21" height="22" viewBox="0 0 21 22"><path d="M0.9 2.9 H18.9 M9.9 6.3 H18.9 M9.9 9.6 H18.9 M9.9 12.8 H18.9 M9.9 16.1 H18.9 M0.9 19.2 H18.9" stroke="#9a9a9a" stroke-width="1.1"/><path d="M8.6 11.3 L3.9 6.8 L3.9 15.8 Z" fill="#3f79c2"/><path d="M0.9 11.3 H4.2" stroke="#3f79c2" stroke-width="2.6"/></svg>
<div class="a" style="left:437.5px;top:361px;width:737px;height:206.5px;background:#fff;border:1px solid #a9a9a9;box-sizing:border-box;overflow:hidden;"></div>
<span id="t87" class="t" style="left:472.5px;top:376.9px;font-size:13.20px;color:#c6c6c6;font-weight:normal;font-family:'Liberation Serif', serif;transform:scaleX(1.1383);">Vorhergehender Absatz Vorhergehender Absatz Vorhergehender Absatz Vorhergehender Absatz</span>
<span id="t88" class="t" style="left:472.5px;top:392.5px;font-size:13.20px;color:#c6c6c6;font-weight:normal;font-family:'Liberation Serif', serif;transform:scaleX(1.1383);">Vorhergehender Absatz Vorhergehender Absatz Vorhergehender Absatz Vorhergehender Absatz</span>
<span id="t89" class="t" style="left:472.5px;top:408.1px;font-size:13.20px;color:#c6c6c6;font-weight:normal;font-family:'Liberation Serif', serif;transform:scaleX(1.1399);">Vorhergehender Absatz</span>
<span id="t90" class="t" style="left:472.5px;top:442.8px;font-size:23.50px;color:#41659c;font-weight:normal;font-family:'Liberation Serif', serif;transform:scaleX(1.0166);">Naschwerk befindet sich ebenfalls im Vitrinenschrank (Blechdose</span>
<span id="t91" class="t" style="left:472.5px;top:472.8px;font-size:23.50px;color:#41659c;font-weight:normal;font-family:'Liberation Serif', serif;transform:scaleX(1.0075);">und davor). Bitte in Maßen.</span>
<span id="t92" class="t" style="left:472.5px;top:502.9px;font-size:13.20px;color:#c6c6c6;font-weight:normal;font-family:'Liberation Serif', serif;transform:scaleX(1.3215);">Nächster Absatz Nächster Absatz Nächster Absatz Nächster Absatz Nächster Absatz Nächster</span>
<span id="t93" class="t" style="left:472.5px;top:518.6px;font-size:13.20px;color:#c6c6c6;font-weight:normal;font-family:'Liberation Serif', serif;transform:scaleX(1.3268);">Absatz Nächster Absatz Nächster Absatz Nächster Absatz Nächster Absatz Nächster Absatz</span>
<span id="t94" class="t" style="left:472.5px;top:534.3px;font-size:13.20px;color:#c6c6c6;font-weight:normal;font-family:'Liberation Serif', serif;transform:scaleX(1.3215);">Nächster Absatz Nächster Absatz Nächster Absatz Nächster Absatz Nächster Absatz Nächster</span>
<span id="t95" class="t" style="left:472.5px;top:550.0px;font-size:13.20px;color:#c6c6c6;font-weight:normal;font-family:'Liberation Serif', serif;transform:scaleX(1.3268);">Absatz Nächster Absatz Nächster Absatz Nächster Absatz Nächster Absatz Nächster Absatz</span>
<div class="a" style="left:437.5px;top:572px;width:737px;height:75px;background:#f0f0f0;border:1px solid #c9c9c9;box-sizing:border-box;"></div>
<span id="t96" class="t" style="left:440.5px;top:577.0px;font-size:13.00px;color:#3c3c3c;font-weight:normal;transform:scaleX(0.9914);">Schriftart: (Standard) +Überschriften (Cambria), 16 Pt., Schriftfarbe: Akzent 1, Abstand</span>
<span id="t97" class="t" style="left:453.8px;top:594.0px;font-size:13.00px;color:#3c3c3c;font-weight:normal;transform:scaleX(0.9790);">Vor:&nbsp; 12 Pt.</span>
<span id="t98" class="t" style="left:453.8px;top:611.5px;font-size:13.00px;color:#3c3c3c;font-weight:normal;transform:scaleX(0.9828);">Nach:&nbsp; 0 Pt., Nicht vom nächsten Absatz trennen, Diesen Absatz zusammenhalten, Ebene 1, Formatvorlage: Verknüpft, Im</span>
<span id="t99" class="t" style="left:440.5px;top:629.0px;font-size:13.00px;color:#3c3c3c;font-weight:normal;transform:scaleX(1.0017);">Formatvorlagenkatalog anzeigen, Priorität: 10</span>
<svg class="a" style="left:1157px;top:581px;" width="11" height="8" viewBox="0 0 11 8"><path d="M1 7 L5.5 2 L10 7" fill="none" stroke="#444" stroke-width="1.4"/></svg>
<div class="a" style="left:1152.5px;top:595.5px;width:19.5px;height:21px;background:#cdcdcd;"></div>
<svg class="a" style="left:1157px;top:630px;" width="11" height="8" viewBox="0 0 11 8"><path d="M1 1 L5.5 6 L10 1" fill="none" stroke="#444" stroke-width="1.4"/></svg>
<div class="a" style="left:425px;top:660px;width:16.5px;height:16.5px;background:#fff;border:1px solid #333;box-sizing:border-box;"></div>
<svg class="a" style="left:427px;top:663px;" width="13" height="11" viewBox="0 0 13 11"><path d="M1 5.5 L4.5 9 L12 1" fill="none" stroke="#333" stroke-width="1.4"/></svg>
<span id="t100" class="t" style="left:446.5px;top:663.0px;font-size:13.00px;color:#333;font-weight:normal;transform:scaleX(1.0161);"><u style="text-decoration-thickness:1px;text-underline-offset:2px;">Z</u>um Formatvorlagenkatalog hinzufügen</span>
<div class="a" style="left:696px;top:660px;width:16.5px;height:16.5px;background:#fff;border:1px solid #333;box-sizing:border-box;"></div>
<span id="t101" class="t" style="left:717.5px;top:662.7px;font-size:13.00px;color:#333;font-weight:normal;transform:scaleX(1.0126);">A<u style="text-decoration-thickness:1px;text-underline-offset:2px;">u</u>tomatisch aktualisieren</span>
<svg class="a" style="left:424.5px;top:686.5px;" width="18" height="18" viewBox="0 0 18 18"><circle cx="8.5" cy="8.5" r="7.8" fill="#fff" stroke="#333" stroke-width="1.2"/><circle cx="8.5" cy="8.5" r="4.2" fill="#222"/></svg>
<span id="t102" class="t" style="left:446.5px;top:689.0px;font-size:13.00px;color:#333;font-weight:normal;transform:scaleX(1.0241);">N<u style="text-decoration-thickness:1px;text-underline-offset:2px;">u</u>r in diesem Dokument</span>
<svg class="a" style="left:607.5px;top:686.5px;" width="18" height="18" viewBox="0 0 18 18"><circle cx="8.5" cy="8.5" r="7.8" fill="#fff" stroke="#333" stroke-width="1.2"/></svg>
<span id="t103" class="t" style="left:630.0px;top:689.0px;font-size:13.00px;color:#333;font-weight:normal;">Neue auf dieser Vorlage basierende Dokumente</span>
<div class="a" style="left:426px;top:721.5px;width:102.5px;height:29.5px;background:#e1e1e1;border:1px solid #adadad;box-sizing:border-box;"></div>
<span id="t104" class="t" style="left:450.0px;top:731.0px;font-size:13.00px;color:#333;font-weight:normal;transform:scaleX(1.0202);"><u style="text-decoration-thickness:1px;text-underline-offset:2px;">F</u>ormat</span>
<svg class="a" style="left:494px;top:734px;" width="6" height="4" viewBox="0 0 6 4"><path d="M0 0 H5 L2.5 3 Z" fill="#222"/></svg>
<div class="a" style="left:954.5px;top:721px;width:102.5px;height:30px;background:#e1e1e1;border:1.5px solid #4a87d8;box-sizing:border-box;"></div>
<span id="t105" class="t" style="left:996.2px;top:730.2px;font-size:13.00px;color:#444;font-weight:normal;transform:scaleX(0.9833);">OK</span>
<div class="a" style="left:1071px;top:721px;width:103px;height:30px;background:#e1e1e1;border:1px solid #adadad;box-sizing:border-box;"></div>
<span id="t106" class="t" style="left:1091.2px;top:730.2px;font-size:13.00px;color:#444;font-weight:normal;transform:scaleX(0.9977);">Abbrechen</span>
</body></html>
